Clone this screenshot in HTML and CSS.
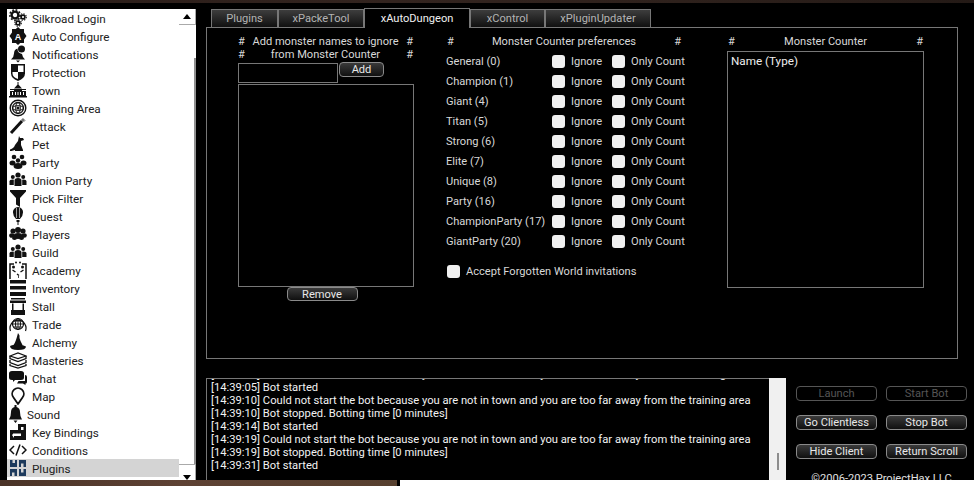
FILE: index.html
```html
<!DOCTYPE html>
<html lang="en">
<head>
<meta charset="utf-8">
<title>phBot - Plugins</title>
<link rel="stylesheet" href="styles.css">
</head>
<body>
<svg class="defs" width="0" height="0" aria-hidden="true">
  <defs>
    <g id="people">
      <circle cx="9" cy="4" r="2.6"/><path d="M5.500 15V9.500Q5.500 7 9 7T12.500 9.500V15Z"/>
      <circle cx="3.800" cy="6" r="2"/><path d="M.5 14V10.500Q.5 8.500 3.800 8.500 4.500 8.500 4.800 8.700V14Z"/>
      <circle cx="14.200" cy="6" r="2"/><path d="M17.500 14V10.500Q17.500 8.500 14.200 8.500 13.500 8.500 13.200 8.700V14Z"/>
    </g>
    <g id="blobs">
      <circle cx="9" cy="5" r="3"/><circle cx="4" cy="6" r="2.600"/><circle cx="14" cy="6" r="2.600"/>
      <ellipse cx="2.800" cy="10.500" rx="2.600" ry="2.300"/><ellipse cx="15.200" cy="10.500" rx="2.600" ry="2.300"/>
      <ellipse cx="9" cy="11" rx="4.500" ry="3"/><ellipse cx="5.500" cy="13" rx="2.500" ry="2"/><ellipse cx="12.500" cy="13" rx="2.500" ry="2"/>
    </g>
  </defs>
</svg>
<div class="app">
  <div class="strip-top"></div>
  <div class="main">
    <aside class="sidebar">
      <ul class="menu">
        <li class="item"><svg class="icon" viewBox="0 0 18 18"><circle cx="6" cy="6" r="3.400" fill="none" stroke="#111" stroke-width="2.400"/><circle cx="6" cy="6" r="5.200" fill="none" stroke="#111" stroke-width="1.500" stroke-dasharray="1.800 1.700"/><circle cx="14" cy="8" r="1.900" fill="none" stroke="#111" stroke-width="1.600"/><circle cx="14" cy="8" r="3.300" fill="none" stroke="#111" stroke-width="1.100" stroke-dasharray="1.300 1.300"/><circle cx="9" cy="14" r="1.900" fill="none" stroke="#111" stroke-width="1.600"/><circle cx="9" cy="14" r="3.300" fill="none" stroke="#111" stroke-width="1.100" stroke-dasharray="1.300 1.300"/></svg><span>Silkroad Login</span></li>
        <li class="item"><svg class="icon" viewBox="0 0 18 18"><path d="M9 0l2.200 2H15v3.500l2.500 3.500L15 12.500V16h-3.800L9 18l-2.200-2H3v-3.500L.5 9 3 5.500V2h3.800z" fill="#111"/><text x="9" y="12.500" class="icon-letter">A</text></svg><span>Auto Configure</span></li>
        <li class="item"><svg class="icon" viewBox="0 0 18 18"><circle cx="12.500" cy="4" r="3.500" fill="#111"/><path d="M2 14.500Q5 12 5 8.500 5 4.500 8.500 3.500 8.500 8 13 9 13.500 12.500 16 14.500ZM7 15.500h4L9 17.500Z" fill="#111"/></svg><span>Notifications</span></li>
        <li class="item"><svg class="icon" viewBox="0 0 18 18"><path d="M2 1h14v9.500Q16 15 9 18 2 15 2 10.500Z" fill="#111"/><path d="M9 2.500h5.500V9H9ZM3.500 9H9v7Q3.500 14 3.500 10.500Z" fill="#fff"/></svg><span>Protection</span></li>
        <li class="item"><svg class="icon" viewBox="0 0 18 18"><path d="M9 3L13 7.500H5Z M8.500 1h1v3h-1Z M1 8h5v1H1ZM12 8h5v1h-5ZM5 8h8v2H5Z M0 15h18v1.500H0Z" fill="#111"/><path d="M1 10h16v5H1Z" fill="#111"/><path d="M3 11h1v3H3ZM6 11h1v3H6ZM8.500 11h1v3h-1ZM11 11h1v3h-1ZM14 11h1v3h-1Z" fill="#fff"/></svg><span>Town</span></li>
        <li class="item"><svg class="icon" viewBox="0 0 18 18"><circle cx="9" cy="9" r="7.800" fill="none" stroke="#111" stroke-width="1.400"/><circle cx="9" cy="9" r="5.500" fill="none" stroke="#111" stroke-width="1.300"/><ellipse cx="9" cy="9" rx="5.500" ry="2.300" fill="none" stroke="#111"/><ellipse cx="9" cy="9" rx="2.300" ry="5.500" fill="none" stroke="#111"/><circle cx="9" cy="9" r="1.500" fill="#111"/></svg><span>Training Area</span></li>
        <li class="item"><svg class="icon" viewBox="0 0 18 18"><path d="M2 16L13 4" stroke="#111" stroke-width="3"/><path d="M13 4L15 2" stroke="#777" stroke-width="3"/><path d="M14.500 5l2-2" stroke="#999"/></svg><span>Attack</span></li>
        <li class="item"><svg class="icon" viewBox="0 0 18 18"><path d="M10 1l1 2h3l1 2-3 1v4l2 5v1H6v-1L2.500 16H1v-1.500Q5 13 6 10 7.500 8 9 6Z" fill="#111"/></svg><span>Pet</span></li>
        <li class="item"><svg class="icon" viewBox="0 0 18 18"><g fill="#111"><circle cx="5" cy="4" r="2.300"/><circle cx="13" cy="4" r="2.300"/><circle cx="9" cy="7.500" r="2.200"/><ellipse cx="3.500" cy="10" rx="3" ry="2.500"/><ellipse cx="14.500" cy="10" rx="3" ry="2.500"/><ellipse cx="9" cy="13" rx="4.500" ry="3"/></g></svg><span>Party</span></li>
        <li class="item"><svg class="icon" viewBox="0 0 18 18"><use href="#people" fill="#111"/></svg><span>Union Party</span></li>
        <li class="item"><svg class="icon" viewBox="0 0 18 18"><path d="M1 1h16v1.500L11 9v9l-4-2.500V9L1 2.500Z" fill="#111"/></svg><span>Pick Filter</span></li>
        <li class="item"><svg class="icon" viewBox="0 0 18 18"><path d="M9 0a5 5 0 0 1 5 5.500Q14 9 11 12H7Q4 9 4 5.500A5 5 0 0 1 9 0Z" fill="#111"/><path d="M7.500 1l0 10M10.500 1l0 10" stroke="#fff" stroke-width=".6"/><path d="M7.500 13h3v2h-3ZM8.500 15h1v3h-1Z" fill="#111"/></svg><span>Quest</span></li>
        <li class="item"><svg class="icon" viewBox="0 0 18 18"><use href="#blobs" fill="#111"/></svg><span>Players</span></li>
        <li class="item"><svg class="icon" viewBox="0 0 18 18"><use href="#people" fill="#111"/></svg><span>Guild</span></li>
        <li class="item"><svg class="icon" viewBox="0 0 18 18"><path d="M1 18V3h4M17 18V3h-4" fill="none" stroke="#111" stroke-width="1.500"/><circle cx="4.500" cy="6" r="1.500" fill="#111"/><circle cx="13.500" cy="6" r="1.500" fill="#111"/><circle cx="7" cy="1.500" r="1" fill="#111"/><circle cx="11" cy="1.500" r="1" fill="#111"/><path d="M3.500 9l3 2M14.500 9l-3 2M8 13l2 1.500M9 16h1" stroke="#111" stroke-width="1.400"/></svg><span>Academy</span></li>
        <li class="item"><svg class="icon" viewBox="0 0 18 18"><path d="M1 1h16v3.500H1ZM1 7h16v3.500H1ZM1 13h16v4H1Z" fill="#111"/></svg><span>Inventory</span></li>
        <li class="item"><svg class="icon" viewBox="0 0 18 18"><path d="M2 1h14v1.500H2ZM1 3.500h16V6H1ZM3 6.500h1.500V13H3ZM13.500 6.500H15V13h-1.500ZM2 13h14v5H2Z" fill="#111"/></svg><span>Stall</span></li>
        <li class="item"><svg class="icon" viewBox="0 0 18 18"><path d="M1.500 16A8 8 0 1 1 16.500 16" fill="none" stroke="#111" stroke-width="1.200"/><circle cx="9" cy="9" r="5.500" fill="none" stroke="#111" stroke-width="1.200"/><ellipse cx="9" cy="9" rx="2.500" ry="5.500" fill="none" stroke="#111"/><path d="M3.500 9h11M4.500 6h9M4.500 12h9M9 3.500v11" stroke="#111" stroke-width=".9"/></svg><span>Trade</span></li>
        <li class="item"><svg class="icon" viewBox="0 0 18 18"><path d="M9 0l1.500 2.500Q10 5 11.500 8 13 11 13.500 12H4.500Q6 10 7 7 8 4 9 0Z" fill="#111"/><path d="M1 13Q4 11.500 5 12h8q1 0 4 1.500Q17 17 9 17 1 17 1 13Z" fill="#111"/></svg><span>Alchemy</span></li>
        <li class="item"><svg class="icon" viewBox="0 0 18 18"><g fill="none" stroke="#111" stroke-width="1.300"><path d="M1 5l8-3 8 3-8 2.500Z"/><path d="M1 5v2.500L9 10.500l8-3V5"/><path d="M1 9v2.500L9 14.500l8-3V9"/><path d="M1 13v1.500L9 17l8-2.500V13"/></g></svg><span>Masteries</span></li>
        <li class="item"><svg class="icon" viewBox="0 0 18 18"><path d="M3 2h9q3 0 3 2.500v4q0 2.500-3 2.500H6l-2 2v-2H3q-3 0-3-2.500v-4Q0 2 3 2Z" fill="#111"/><path d="M16 6q2 0 2 2v5q0 1.500-1.500 1.500v1.500l-2.500-1.500H8l1.500-2.500h6.500Z" fill="#111"/></svg><span>Chat</span></li>
        <li class="item"><svg class="icon" viewBox="0 0 18 18"><path d="M9 17L4.500 10.500A5.800 5.800 0 1 1 13.500 10.500Z" fill="none" stroke="#111" stroke-width="1.800" stroke-linejoin="round"/></svg><span>Map</span></li>
        <li class="item item-narrow"><svg class="icon icon-narrow" viewBox="0 0 13 18"><path d="M5.500 0h2v2Q11 3 11 7q0 5 2 7.500H0Q2 12 2 7q0-4 3.500-5ZM4.500 15.500h4L6.500 18Z" fill="#111"/></svg><span>Sound</span></li>
        <li class="item"><svg class="icon" viewBox="0 0 18 18"><path d="M9 1h8v16H1V7h8Z" fill="#111"/><path d="M12 4h2.500v3H12ZM5 10.500h7V13H5V15L3 12l2-2Z" fill="#fff"/></svg><span>Key Bindings</span></li>
        <li class="item"><svg class="icon" viewBox="0 0 18 18"><path d="M5 5L1 9l4 4M13 5l4 4-4 4M11 3.500L7 14.500" fill="none" stroke="#111" stroke-width="1.500"/></svg><span>Conditions</span></li>
        <li class="item item-selected"><svg class="icon" viewBox="0 0 18 18"><path d="M1 1h2.500v3H6V1h2v7H1ZM10 1h7v7h-2.500V4.500H12V8h-2ZM1 10h7v7H5.500v-3.500H3V17H1ZM10 10h2v3.500h2.500V10H17v7h-7Z" fill="#1d3a5c"/></svg><span>Plugins</span></li>
      </ul>
      <div class="side-scroll">
        <div class="side-btn"><span class="arrow-up"></span></div>
        <div class="side-track"></div>
        <div class="side-btn side-btn-down"><span class="arrow-down"></span></div>
      </div>
    </aside>
    <div class="content">
      <nav class="tabs">
        <div class="tab tab-plugins">Plugins</div>
        <div class="tab tab-packet">xPackeTool</div>
        <div class="tab tab-active">xAutoDungeon</div>
        <div class="tab tab-control">xControl</div>
        <div class="tab tab-updater">xPluginUpdater</div>
      </nav>
      <section class="panel">
        <div class="col col-ignore">
          <div class="hdr hdr-ignore"><span>#</span><span>Add monster names to ignore</span><span>#</span></div>
          <div class="hdr hdr-ignore"><span>#</span><span>from Monster Counter</span><span>#</span></div>
          <div class="add-row">
            <div class="input"></div>
            <div class="btn btn-add">Add</div>
          </div>
          <div class="listbox listbox-ignore"></div>
          <div class="btn btn-remove">Remove</div>
        </div>
        <div class="col col-prefs">
          <div class="hdr hdr-prefs"><span>#</span><span>Monster Counter preferences</span><span>#</span></div>
          <div class="pref"><span class="pref-name">General (0)</span><span class="check"></span><span class="lbl lbl-ignore">Ignore</span><span class="check"></span><span class="lbl">Only Count</span></div>
          <div class="pref"><span class="pref-name">Champion (1)</span><span class="check"></span><span class="lbl lbl-ignore">Ignore</span><span class="check"></span><span class="lbl">Only Count</span></div>
          <div class="pref"><span class="pref-name">Giant (4)</span><span class="check"></span><span class="lbl lbl-ignore">Ignore</span><span class="check"></span><span class="lbl">Only Count</span></div>
          <div class="pref"><span class="pref-name">Titan (5)</span><span class="check"></span><span class="lbl lbl-ignore">Ignore</span><span class="check"></span><span class="lbl">Only Count</span></div>
          <div class="pref"><span class="pref-name">Strong (6)</span><span class="check"></span><span class="lbl lbl-ignore">Ignore</span><span class="check"></span><span class="lbl">Only Count</span></div>
          <div class="pref"><span class="pref-name">Elite (7)</span><span class="check"></span><span class="lbl lbl-ignore">Ignore</span><span class="check"></span><span class="lbl">Only Count</span></div>
          <div class="pref"><span class="pref-name">Unique (8)</span><span class="check"></span><span class="lbl lbl-ignore">Ignore</span><span class="check"></span><span class="lbl">Only Count</span></div>
          <div class="pref"><span class="pref-name">Party (16)</span><span class="check"></span><span class="lbl lbl-ignore">Ignore</span><span class="check"></span><span class="lbl">Only Count</span></div>
          <div class="pref"><span class="pref-name">ChampionParty (17)</span><span class="check"></span><span class="lbl lbl-ignore">Ignore</span><span class="check"></span><span class="lbl">Only Count</span></div>
          <div class="pref"><span class="pref-name">GiantParty (20)</span><span class="check"></span><span class="lbl lbl-ignore">Ignore</span><span class="check"></span><span class="lbl">Only Count</span></div>
          <div class="accept"><span class="check"></span><span class="lbl">Accept Forgotten World invitations</span></div>
        </div>
        <div class="col col-counter">
          <div class="hdr hdr-counter"><span>#</span><span>Monster Counter</span><span>#</span></div>
          <div class="listbox listbox-counter">Name (Type)</div>
        </div>
      </section>
      <div class="bottom">
        <div class="log">
          <div class="log-inner">
            <div class="log-line">[14:39:05] Could not start the bot because you are not in town and you are too far away from the training area</div>
            <div class="log-line">[14:39:05] Bot started</div>
            <div class="log-line">[14:39:10] Could not start the bot because you are not in town and you are too far away from the training area</div>
            <div class="log-line">[14:39:10] Bot stopped. Botting time [0 minutes]</div>
            <div class="log-line">[14:39:14] Bot started</div>
            <div class="log-line">[14:39:19] Could not start the bot because you are not in town and you are too far away from the training area</div>
            <div class="log-line">[14:39:19] Bot stopped. Botting time [0 minutes]</div>
            <div class="log-line">[14:39:31] Bot started</div>
          </div>
        </div>
        <div class="log-scroll"><div class="log-thumb"></div></div>
        <div class="actions">
          <div class="action-grid">
            <div class="btn btn-action btn-disabled">Launch</div>
            <div class="btn btn-action btn-disabled">Start Bot</div>
            <div class="btn btn-action">Go Clientless</div>
            <div class="btn btn-action">Stop Bot</div>
            <div class="btn btn-action">Hide Client</div>
            <div class="btn btn-action">Return Scroll</div>
          </div>
          <div class="copyright">©2006-2023 ProjectHax LLC</div>
        </div>
      </div>
    </div>
  </div>
  <div class="strip-bottom">
    <div class="strip-brown"></div>
    <div class="strip-white"></div>
  </div>
</div>
</body>
</html>
```
FILE: styles.css
```css
* { box-sizing: border-box; }
html, body { margin: 0; padding: 0; background: #000; }
body {
  width: 974px;
  height: 486px;
  overflow: hidden;
  font-family: Roboto, "Open Sans", sans-serif;
  font-size: 11.100px;
  line-height: 13px;
  color: #d8d8d8;
}
.defs { position: absolute; }
.app {
  position: relative;
  width: 974px;
  height: 486px;
  overflow: hidden;
  background: #000;
}
.strip-top {
  height: 3px;
  background: linear-gradient(90deg, #2a1d19, #33241f 40%, #2e211c 70%, #241a16);
}
.main { display: flex; align-items: flex-start; }

/* sidebar */
.sidebar {
  display: flex;
  margin: 6px 0 0 7px;
  width: 189px;
  height: 471px;
  background: #fff;
  color: #222;
  font-size: 11.700px;
}
.menu {
  list-style: none;
  margin: 0;
  padding: 0;
  width: 172px;
  flex: none;
}
.item {
  display: flex;
  align-items: center;
  height: 18px;
  padding-left: 2px;
  white-space: nowrap;
}
.item span { padding-top: 2px; }
.item-selected { background: #d4d4d4; }
.icon { width: 18px; height: 18px; flex: none; margin-right: 5px; }
.icon-narrow { width: 13px; margin-right: 5px; }
.icon-letter {
  font-family: "Liberation Sans", sans-serif;
  font-size: 9px;
  font-weight: 700;
  fill: #fff;
  text-anchor: middle;
}
.side-scroll {
  display: flex;
  flex-direction: column;
  width: 17px;
  background: #fff;
}
.side-btn {
  height: 16px;
  flex: none;
  display: flex;
  align-items: center;
  justify-content: center;
  background: #fff;
  border-bottom: 1px solid #aaa;
  border-right: 1px solid #aaa;
}
.side-btn-down { border-top: 1px solid #aaa; border-bottom: 0; align-items: flex-end; }
.side-track {
  flex: 1;
  margin-top: 33px;
  border-right: 2px solid #8f8f8f;
}
.arrow-up, .arrow-down { width: 0; height: 0; border: 4px solid transparent; }
.arrow-up { border-top: 0; border-bottom: 5px solid #000; }
.arrow-down { border-bottom: 0; border-top: 5px solid #000; }

/* content */
.content { margin-left: 10px; width: 768px; flex: none; }
.tabs {
  display: flex;
  align-items: flex-end;
  height: 19px;
  margin-top: 5px;
  padding-left: 5px;
  position: relative;
}
.tab {
  height: 18px;
  border: 1px solid #777;
  border-bottom: 0;
  background: linear-gradient(#3d3d3d, #101010);
  color: #b4b4b4;
  display: flex;
  align-items: center;
  justify-content: center;
  white-space: nowrap;
}
.tab-plugins { width: 67px; }
.tab-packet { width: 86px; }
.tab-active {
  width: 106px;
  height: 20px;
  margin-bottom: -1px;
  background: #000;
  color: #f0f0f0;
  position: relative;
  z-index: 1;
}
.tab-control { width: 75px; }
.tab-updater { width: 106px; }
.panel {
  display: flex;
  width: 752px;
  height: 332px;
  border: 1px solid #777;
  padding: 7px 0 0 31px;
}
.col { flex: none; }
.col-ignore { width: 176px; }
.col-prefs { width: 281px; margin-left: 32px; }
.col-counter { width: 197px; }
.hdr {
  display: flex;
  justify-content: space-between;
  height: 13px;
  white-space: nowrap;
  padding: 0 0 0 1px;
}
.hdr-ignore { padding: 0 1px 0 0; width: 176px; }
.hdr-prefs { width: 235px; margin-bottom: 3px; }
.hdr-counter { padding: 0 1px 0 1px; }
.add-row { display: flex; align-items: flex-start; height: 22px; margin-top: 1px; }
.input {
  width: 100px;
  height: 20px;
  margin-top: 1px;
  border: 1px solid #777;
}
.btn {
  border: 1px solid #8a8a8a;
  border-radius: 4px;
  background: linear-gradient(#3a3a3a, #101010);
  color: #e8e8e8;
  display: flex;
  align-items: center;
  justify-content: center;
  white-space: nowrap;
}
.btn-add { width: 45px; height: 15px; margin-left: 1px; }
.listbox { border: 1px solid #777; }
.listbox-ignore { width: 176px; height: 203px; }
.btn-remove { width: 71px; height: 14px; margin: 0 auto; position: relative; left: -4px; }
.pref { display: flex; align-items: center; height: 20px; }
.pref-name { width: 106px; white-space: nowrap; }
.check {
  width: 13px;
  height: 13px;
  flex: none;
  border-radius: 3px;
  background: #f0f0f0;
  margin-right: 6px;
}
.lbl { white-space: nowrap; }
.lbl-ignore { width: 41px; }
.accept { display: flex; align-items: center; height: 20px; margin-top: 10px; padding-left: 1px; }
.listbox-counter {
  width: 197px;
  height: 237px;
  margin-top: 3px;
  padding: 2px 3px;
  font-size: 11.700px;
  line-height: 15px;
  color: #eee;
}

/* bottom */
.bottom { display: flex; margin-top: 19px; height: 108px; }
.log {
  width: 563px;
  flex: none;
  border-left: 1px solid #777;
  border-top: 1px solid #777;
  overflow: hidden;
  color: #f2f2f2;
  font-size: 11.200px;
}
.log-inner { padding-left: 4px; margin-top: -11px; }
.log-line { height: 13px; line-height: 13px; white-space: nowrap; }
.log-scroll {
  width: 17px;
  flex: none;
  background: #f0f0f0;
  display: flex;
  justify-content: center;
  align-items: flex-start;
  padding-top: 75px;
}
.log-thumb { width: 2px; height: 17px; background: #8d8d8d; }
.actions { margin-left: 10px; width: 171px; flex: none; }
.action-grid {
  display: grid;
  grid-template-columns: 81px 81px;
  grid-auto-rows: 15px;
  column-gap: 9px;
  row-gap: 14px;
  padding-top: 8px;
}
.btn-disabled { color: #555; border-color: #555; background: #000; }
.copyright {
  margin-top: 13px;
  text-align: center;
  white-space: nowrap;
  color: #e0e0e0;
}

.strip-bottom {
  position: absolute;
  left: 0;
  right: 0;
  bottom: 0;
  height: 6px;
  display: flex;
}
.strip-brown {
  width: 397px;
  background: linear-gradient(90deg, #4a3327, #5e4234 45%, #57402f 100%);
}
.strip-white {
  flex: 1;
  margin-left: 3px;
  background: #fff;
}
```
